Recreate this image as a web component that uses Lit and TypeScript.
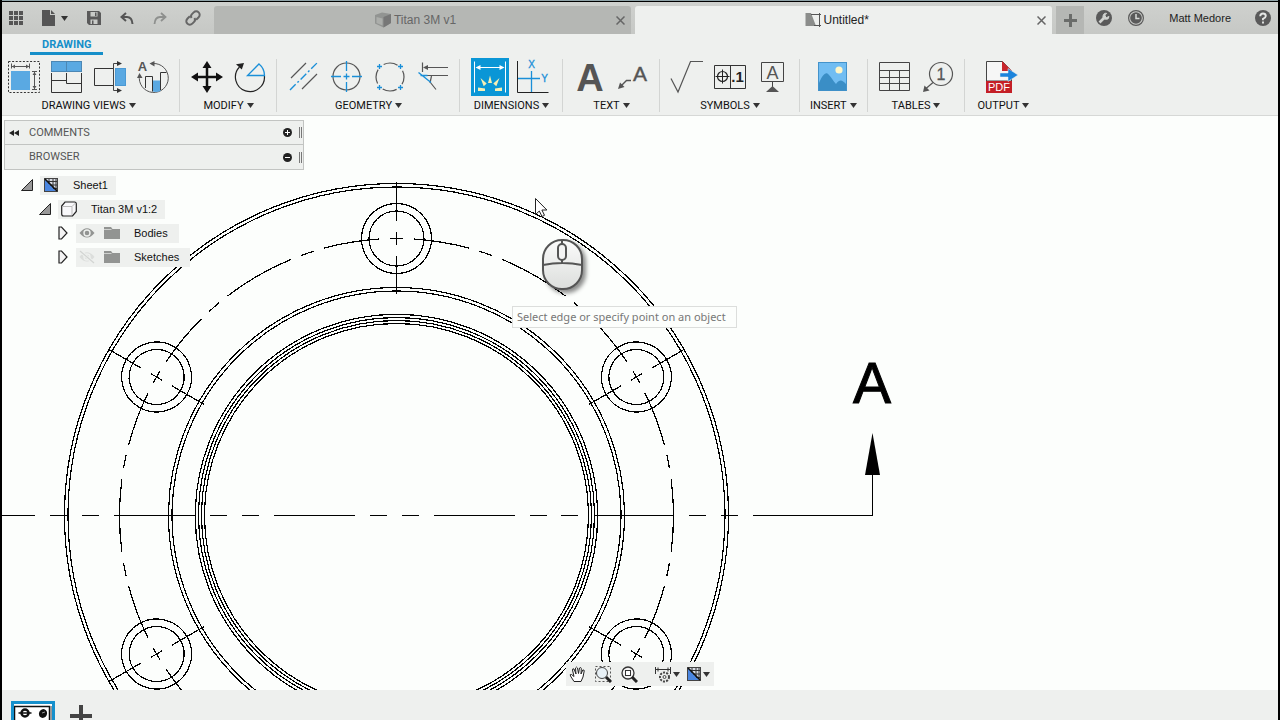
import { LitElement, html, svg, css } from "lit";
import { customElement, property } from "lit/decorators.js";

const CENTER = { x: 396.5, y: 515.5 };
const RINGS = [332, 328.5, 228, 224.5, 201.2, 198, 195, 192];
const BOLT_RADIUS = 277;
const HOLES = [0, 60, 120, 180, 240, 300];
// Start and end of each dash between two neighbouring holes, in degrees
const BOLT_DASHES = [
  [3.7, 15.2],
  [17.4, 20.2],
  [22.4, 37.6],
  [39.8, 42.6],
  [44.8, 56.3],
];
const AXIS_DASHES = [
  [2, 35], [50, 68], [82, 99], [114, 195], [210, 227], [242, 259], [274, 355],
  [370, 387], [402, 419], [434, 515], [530, 547], [561, 578], [594, 674],
  [689, 706], [721, 738], [753, 873],
];

const polar = (r: number, deg: number) => {
  const a = (deg * Math.PI) / 180;
  return `${(CENTER.x + r * Math.sin(a)).toFixed(2)} ${(CENTER.y - r * Math.cos(a)).toFixed(2)}`;
};

const arc = (r: number, from: number, to: number) =>
  `M${polar(r, from)}A${r} ${r} 0 0 1 ${polar(r, to)}`;

const caret = html`<svg class="caret" width="7" height="5" viewBox="0 0 7 5" aria-hidden="true"><path d="M0 0h7L3.500 5z" fill="#333" /></svg>`;

const sheetGlyph = svg`
  <rect x=".5" y=".5" width="13" height="13" fill="#d8dce4" stroke="#444" />
  <path d="M1 1v12h11z" fill="#4a86e0" />
  <path d="M5 1v5M9 1v9M12 1v11M3 3.500h10M6 7h7M9 10.500h4" stroke="#333" fill="none" />
  <path d="M1 1l12 12" stroke="#111" stroke-width="1.600" />`;

interface Tool { name: string; at: number; active?: boolean; art: unknown }
interface Group { label: string; kind?: string; tools: Tool[] }

const G = "#555";
const B = "#1a8fd8";

const GROUPS: Group[] = [
  {
    label: "DRAWING VIEWS", kind: "first",
    tools: [
      { name: "Base view", at: 5, art: svg`
        <rect x="8.500" y="61.500" width="31" height="31" fill="none" stroke="#333" stroke-dasharray="2 1.600" />
        <rect x="11" y="71" width="19" height="19" fill="#5aa9e2" />
        <path d="M11.500 63.500v5M29.500 63.500v5M12 66.500h17M32 71.500h5M32 89.500h5M34.500 72v17" stroke=${G} fill="none" />
        <path d="M12 66.500l3-2v4zM29 66.500l-3-2v4zM34.500 72l-2 3h4zM34.500 89l-2-3h4z" fill=${G} />` },
      { name: "Projected view", at: 48, art: svg`
        <rect x="51.500" y="61.500" width="30" height="10" fill="#5aa9e2" stroke="#4b87b4" />
        <path d="M66.500 62v9" stroke="#4b87b4" />
        <path d="M51.500 73v7.500h15v3h15V73M66.500 73v8M51.500 80v12.500h30V83" fill="none" stroke="#333" />` },
      { name: "Section view", at: 91, art: svg`
        <path d="M113.500 68.500h-19v17h19" fill="none" stroke="#333" />
        <rect x="115.500" y="68.500" width="10" height="17" fill="#5aa9e2" stroke="#4b9ad4" />
        <path d="M118 63.500h-4.500v27h4.500" fill="none" stroke="#444" />
        <path d="M122 63.500l-5-2.500v5zM122 90.500l-5-2.500v5z" fill="#333" />` },
      { name: "Detail view", at: 134, art: svg`
        <text x="142.500" y="71" class="ic b" font-size="13" text-anchor="middle" fill=${G}>A</text>
        <path d="M153 63.500a14.500 14.500 0 1 1-13.500 12" fill="none" stroke=${G} />
        <path d="M149.500 63.500l5-2.500v5.500zM139.500 73l-2.500 5h5.500z" fill=${G} />
        <path d="M152.500 80.500h8V91q-4 1.500-8 .5z" fill="#5aa9e2" />
        <path d="M145.500 88V76.500h7v15M160.500 90V72.500h6" fill="none" stroke="#333" />` },
    ],
  },
  {
    label: "MODIFY",
    tools: [
      { name: "Move", at: 188, art: svg`
        <path d="M207 66v22M196 77h22" stroke="#111" stroke-width="2.500" />
        <path d="M207 61l-4.500 7h9zM207 93l-4.500-7h9zM191 77l7-4.500v9zM223 77l-7-4.500v9z" fill="#111" />` },
      { name: "Rotate", at: 231, art: svg`
        <path d="M239.500 67a14.500 14.500 0 1 0 24.800 8" fill="none" stroke="#222" stroke-width="1.200" />
        <path d="M244 63l-8 1.200 5.800 5.300z" fill="#222" />
        <path d="M264.500 75.500h-17L259 64a15 15 0 0 1 5.500 11.500z" fill="none" stroke=${B} stroke-width="1.300" />` },
    ],
  },
  {
    label: "GEOMETRY",
    tools: [
      { name: "Centerline", at: 285, art: svg`
        <path d="M291 78l15-15M302 89l15-15" stroke=${G} stroke-width="1.200" />
        <path d="M290 90l27-27" stroke=${B} stroke-width="1.400" stroke-dasharray="8 2.500 2 2.500" />` },
      { name: "Center mark", at: 328, art: svg`
        <circle cx="346.500" cy="76.500" r="13.500" fill="none" stroke=${G} stroke-width="1.200" />
        <path d="M331 76.500h10M343.500 76.500h6M352 76.500h10M346.500 61v10M346.500 73.500v6M346.500 82v10" stroke=${B} stroke-width="1.300" />` },
      { name: "Center mark pattern", at: 371, art: svg`
        <circle cx="390" cy="77" r="14" fill="none" stroke=${G} stroke-width="1.200" stroke-dasharray="14.500 7.500" stroke-dashoffset="7" />
        <path d="M377 66.500h5M379.500 64v5M398 66.500h5M400.500 64v5M377 87.500h5M379.500 85v5M398 87.500h5M400.500 85v5" stroke=${B} stroke-width="1.300" />` },
      { name: "Edge extension", at: 414, art: svg`
        <path d="M422.500 62.500v9.500M424 67.500h24M427 75.500h21M431.500 76l-1.500 7M430 82l6 7.500" stroke=${G} stroke-width="1.200" fill="none" />
        <path d="M423 67.500l5-2.500v5z" fill=${G} />
        <path d="M418.500 72.500l12.500 10M420.500 75.500h7" stroke=${B} stroke-width="1.400" />` },
    ],
  },
  {
    label: "DIMENSIONS", kind: "wide",
    tools: [
      { name: "Dimension", at: 471, active: true, art: svg`
        <path d="M474.500 61.500v31M505.500 61.500v31M477 67.500h26" stroke="#fff" />
        <path d="M475.500 67.500l5-2.500v5zM504.500 67.500l-5-2.500v5z" fill="#fff" />
        <path d="M490 75.500l2 7.500h-4zM480.500 78l6.200 5.500-3 2.700zM499.500 78l-6.200 5.500 3 2.700zM478 87.500l7 1v2.500h-7zM502 87.500l-7 1v2.500h7z" fill="#f6efb4" />` },
      { name: "Ordinate dimension", at: 514, art: svg`
        <path d="M517.500 61v31.500h31" fill="none" stroke="#222" />
        <path d="M518 78.500h22M531.500 71v21" stroke=${B} stroke-width="1.300" />
        <text x="531.500" y="68" class="ic" font-size="10" text-anchor="middle" fill=${B} stroke=${B} stroke-width=".3">X</text>
        <text x="544.500" y="82" class="ic" font-size="10" text-anchor="middle" fill=${B} stroke=${B} stroke-width=".3">Y</text>` },
    ],
  },
  {
    label: "TEXT",
    tools: [
      { name: "Text", at: 571, art: svg`<text x="590" y="91" class="ic b" font-size="38" text-anchor="middle" fill=${G}>A</text>` },
      { name: "Leader text", at: 614, art: svg`
        <text x="640" y="80.500" class="ic" font-size="21" text-anchor="middle" fill=${G} stroke=${G} stroke-width=".4">A</text>
        <path d="M631 80.500h-4.500l-6 6" fill="none" stroke=${G} stroke-width="1.400" />
        <path d="M618 89l2-6.500 4.500 4.500z" fill=${G} />` },
    ],
  },
  {
    label: "SYMBOLS",
    tools: [
      { name: "Surface texture", at: 668, art: svg`<path d="M671 78.500l7 13.500 12.500-30.500H703" fill="none" stroke=${G} stroke-width="1.200" />` },
      { name: "Feature control frame", at: 711, art: svg`
        <path d="M714.500 65.500h31v23h-31zM730.500 65.500v23" fill="none" stroke="#333" />
        <circle cx="722.500" cy="76.500" r="5" fill="none" stroke="#222" stroke-width="1.200" />
        <path d="M715.500 76.500h14M722.500 69.500v14" stroke="#222" />
        <text x="737.500" y="82" class="ic b" font-size="15" text-anchor="middle" fill="#222">.1</text>` },
      { name: "Datum identifier", at: 754, art: svg`
        <path d="M761.500 62.500h22v19h-22zM772.500 82v5" fill="none" stroke="#444" />
        <text x="772.500" y="79" class="ic" font-size="18" text-anchor="middle" fill=${G}>A</text>
        <path d="M772.500 86l-6.500 6h13z" fill=${G} />` },
    ],
  },
  {
    label: "INSERT", kind: "broad",
    tools: [
      { name: "Insert image", at: 815, art: svg`
        <rect x="819.500" y="62.500" width="28" height="28" fill="#71bdf2" stroke="#4393cb" />
        <path d="M820 83c4-9 7-12 10-8 3 3 4 6 7 9 4-5 6-4 10 0v6.500h-27z" fill="#3a8ec6" />
        <circle cx="840" cy="70" r="3.600" fill="#fff6c8" />` },
    ],
  },
  {
    label: "TABLES",
    tools: [
      { name: "Table", at: 877, art: svg`<path d="M880.500 62.500h30v28h-30zM880.500 70.500h30M880.500 77.500h30M880.500 83.500h30M890.500 70.500v20M900.500 70.500v20" fill="none" stroke="#444" />` },
      { name: "Balloon", at: 920, art: svg`
        <circle cx="942" cy="74" r="11.500" fill="none" stroke=${G} stroke-width="1.200" />
        <text x="942" y="80" class="ic" font-size="16" text-anchor="middle" fill=${G} stroke=${G} stroke-width=".3">1</text>
        <path d="M934 82.500l-7 6" stroke=${G} stroke-width="1.200" />
        <path d="M924 92l1.500-6.500 5 5z" fill=${G} />` },
    ],
  },
  {
    label: "OUTPUT", kind: "last",
    tools: [
      { name: "Output PDF", at: 986, art: svg`
        <path d="M1003.500 61.500h-16V81h25V71z" fill="#f6f6f6" stroke="#444" />
        <path d="M1003 61l10 10h-10z" fill="#c8262c" />
        <rect x="987" y="81" width="26" height="12" fill="#c41f26" />
        <text x="1000" y="91" class="ic" font-size="11" text-anchor="middle" fill="#fff">PDF</text>
        <path d="M1001 73h8v-4.500l10 6.500-10 6.500V77h-8z" fill="#1c84dc" stroke="#eef1ee" stroke-width=".5" />` },
    ],
  },
];

@customElement("ribbon-group")
class RibbonGroup extends LitElement {
  @property({ attribute: false }) group!: Group;

  static styles = css`
    :host { display: block; }
    .tools { display: flex; gap: 5px; justify-content: center; }
    button { border: 0; padding: 0; background: none; font: inherit; color: inherit; }
    .tool { width: 38px; height: 38px; display: block; }
    .tool.active { background: #0a96d6; }
    .tool svg { display: block; overflow: visible; }
    .ic { font-family: "Liberation Sans", Arial, sans-serif; }
    .b { font-weight: bold; }
    .label { display: flex; align-items: center; gap: 3px; margin: 0 auto; height: 19px; font: 11px/19px Roboto, sans-serif; color: #111; white-space: nowrap; }
  `;

  render() {
    return html`
      <div class="tools">
        ${this.group.tools.map((t) => html`
          <button class=${t.active ? "tool active" : "tool"} aria-label=${t.name}>
            <svg width="38" height="38" viewBox=${`${t.at} 58 38 38`}>${t.art}</svg>
          </button>`)}
      </div>
      <button class="label">${this.group.label}${caret}</button>
    `;
  }
}

@customElement("drawing-canvas")
class DrawingCanvas extends LitElement {
  static styles = css`
    :host { display: block; overflow: hidden; }
    svg { display: block; width: 100%; height: 100%; }
    .lines { fill: none; stroke: #000; stroke-width: 1.200px; shape-rendering: crispEdges; }
    .mark { font: 57px "Liberation Sans", Arial, sans-serif; stroke: #000; stroke-width: 1px; }
    .mouse { filter: drop-shadow(3px 3px 2px rgba(0, 0, 0, 0.45)); }
  `;

  render() {
    return html`
      <svg role="img" aria-label="Flange drawing">
        <defs>
          <linearGradient id="body" x1="0" y1="0" x2="0" y2="1">
            <stop offset="0" stop-color="#fbfbfb" />
            <stop offset="1" stop-color="#dcdedc" />
          </linearGradient>
        </defs>
        <g transform="translate(-2 -116)">
          <g class="lines">
            ${RINGS.map((r) => svg`<circle cx=${CENTER.x} cy=${CENTER.y} r=${r} />`)}
            ${HOLES.map((h) => svg`
              <path d=${BOLT_DASHES.map(([a, b]) => arc(BOLT_RADIUS, h + a, h + b)).join("")} />
              <g transform="rotate(${h} ${CENTER.x} ${CENTER.y})">
                <circle cx="396.500" cy="238.500" r="35" />
                <circle cx="396.500" cy="238.500" r="27.500" />
                <path d="M396.500 182v38.500M396.500 256v37.500M396.500 232v13M390 238.500h13" />
              </g>`)}
            <path d=${AXIS_DASHES.map(([a, b]) => `M${a} 515.5H${b}`).join("")} />
            <path d="M872.500 515.500V470" />
          </g>
          <path d="M872.500 433l7.500 42h-15z" />
          <text class="mark" x="872" y="403" text-anchor="middle">A</text>
          <g class="mouse" stroke="#555" stroke-width="2" fill="none">
            <rect x="543" y="240" width="39" height="49" rx="19" fill="url(#body)" />
            <path d="M543 265q19.500-4 39 0M562 240v4M562 260v4" />
            <rect x="558" y="244" width="8" height="16" rx="4" fill="#f4f4f4" />
          </g>
          <path d="M535.500 198.500v16l3.800-3.500 2.700 5.500 2.500-1.200-2.600-5.300h5z" fill="#fff" stroke="#222" />
        </g>
      </svg>
    `;
  }
}

@customElement("app-root")
class AppRoot extends LitElement {
  static styles = css`
    :host { display: block; font: 11px/14px "Liberation Sans", Arial, sans-serif; color: #222; }
    * { box-sizing: border-box; }
    button { border: 0; padding: 0; margin: 0; background: none; font: inherit; color: inherit; }
    svg { display: block; }
    .shell { display: flex; flex-direction: column; height: 100vh; overflow: hidden; border: solid #000; border-width: 0 2px; background: #eef0ee; }
    .edge { height: 2px; flex: none; background: #8fa3a8; border-bottom: 1px solid #000; }

    .topbar { display: flex; flex: none; height: 32px; background: linear-gradient(#cfd1ce, #c6c8c5); }
    .quick { display: flex; gap: 9px; padding: 0 9px 0 2px; align-items: center; }
    .sq { width: 24px; height: 24px; display: flex; align-items: center; justify-content: center; flex: none; }
    .file { width: 36px; height: 24px; display: flex; align-items: center; gap: 6px; padding-left: 5px; }
    .tabs { display: flex; flex: 1; gap: 4px; padding-top: 4px; }
    .tab { display: flex; flex: 1; align-items: center; padding: 0 4px; background: #b5b7b4; border-radius: 3px 3px 0 0; color: #666; }
    .tab.current { background: #eef0ee; color: #222; }
    .name { flex: 1; display: flex; align-items: center; justify-content: center; gap: 3px; font-size: 12px; }
    .close { width: 14px; height: 14px; display: flex; align-items: center; justify-content: center; }
    .account { display: flex; align-items: center; padding-left: 4px; }
    .add { width: 28px; height: 28px; background: #b5b7b4; display: flex; align-items: center; justify-content: center; align-self: flex-end; }
    .side { margin-left: 8px; }
    .user { margin: 0 20px 0 21px; white-space: nowrap; }
    .help { margin-right: 3px; }

    .ribbon { flex: none; border-bottom: 1px solid #d6d8d6; }
    .spaces { display: flex; height: 21px; padding-left: 28px; }
    .space { padding: 4px 12px 0; border-bottom: 3px solid #158fc9; color: #158fc9; font: bold 11px/14px Roboto, sans-serif; }
    .groups { display: flex; padding-top: 3px; }
    .group { padding: 0 7px 0 8px; border-right: 1px solid #d3d5d3; border-image: linear-gradient(transparent 2px, #d3d5d3 2px, #d3d5d3 53px, transparent 53px) 1; }
    .first { padding-left: 3px; }
    .wide { padding: 0 10px 0 11px; }
    .broad { padding: 0 10px; }
    .last { padding: 0 13px; border: 0; }

    .work { position: relative; flex: 1; min-height: 0; background: #fcfefc; }
    .paper { position: absolute; inset: 0; }
    .panels { position: relative; width: 304px; padding: 4px 2px; }
    .panel { display: flex; align-items: center; height: 25px; padding: 0 1px 0 4px; background: #eef0ee; border: 1px solid #c2c4c2; color: #555; }
    .panel + .panel { border-top: 0; }
    .panel h2 { flex: 1; margin: 0; font: 11px/14px Roboto, sans-serif; }
    .fold { width: 12px; height: 14px; margin-right: 8px; display: flex; align-items: center; }
    .grip { width: 3px; height: 11px; margin-left: 7px; border: solid #777; border-width: 0 1px; }
    .tree { margin: 0; padding: 3px 0 0 17px; list-style: none; }
    .node { display: flex; align-items: center; height: 24px; }
    .twist { width: 12px; height: 14px; margin-right: 7px; display: flex; align-items: center; }
    .item { display: flex; align-items: center; height: 19px; padding: 0 8px 0 3px; background: #eef0ee; color: #111; }
    .item span { margin-left: 14px; }
    .l2 { padding-left: 18px; }
    .l3 { padding-left: 36px; }
    .l3 .item { gap: 9px; padding-right: 11px; }
    .l3 .item span { margin-left: 5px; }

    .tip { position: absolute; left: 510px; top: 190px; padding: 0 10px 0 4px; border: 1px solid #dcdedc; background: #fcfefc; color: #777; font: 11px/20px "Noto Sans", sans-serif; white-space: nowrap; }
    .nav { position: absolute; bottom: 4px; left: 50%; transform: translateX(-50%); display: flex; align-items: center; gap: 4px; height: 24px; padding-right: 2px; background: #eef0ee; }
    .nav button { display: flex; align-items: center; justify-content: center; gap: 2px; width: 22px; height: 20px; }
    .nav .menu { width: 27px; }
    .nav .apart { margin-left: 10px; }

    .sheets { display: flex; gap: 15px; flex: none; height: 30px; padding: 11px 9px 0; overflow: hidden; }
    .thumb { width: 44px; height: 32px; border: 3px solid #1690cc; background: #fff; flex: none; }
    .plus { width: 22px; height: 30px; display: flex; align-items: center; }
  `;

  private close(label: string) {
    return html`<button class="close" aria-label=${label}><svg width="9" height="9" viewBox="0 0 9 9"><path d="M.5 .5l8 8M8.500 .5l-8 8" stroke="#666" stroke-width="1.500" /></svg></button>`;
  }

  private twist(open: boolean) {
    return html`<button class="twist" aria-label=${open ? "Collapse" : "Expand"}>
      ${open
        ? html`<svg width="12" height="12" viewBox="0 0 12 12"><path d="M11.500 .5v11H.5z" fill="#999" stroke="#222" /></svg>`
        : html`<svg width="12" height="14" viewBox="-1 0 12 14"><path d="M1 1h2.500L9 7l-5.500 6H1z" fill="#f4f4f4" stroke="#222" stroke-width="1.200" /></svg>`}
    </button>`;
  }

  private folder = html`<svg width="16" height="14" viewBox="0 0 16 14"><path d="M0 1h7l1.500 2H16v10H0z" fill="#929492" /><path d="M0 3.500h7.500" stroke="#cfd1cf" /></svg>`;

  private eye(on: boolean) {
    return html`<svg width="16" height="14" viewBox="0 0 16 14">
      <path d="M.5 7Q8-2.500 15.500 7 8 16 .5 7z" fill=${on ? "#929492" : "#dcdedc"} />
      <circle cx="8" cy="7" r="3" fill=${on ? "#929492" : "#dcdedc"} stroke="#eef0ee" stroke-width="1.400" />
      ${on ? "" : svg`<path d="M1 1l14 12" stroke="#eef0ee" stroke-width="3" /><path d="M1 1l14 12" stroke="#d2d4d2" stroke-width="1.200" />`}
    </svg>`;
  }

  private topbar() {
    return html`
      <header class="topbar">
        <div class="quick">
          <button class="sq" aria-label="Data panel"><svg width="14" height="14" viewBox="0 0 14 14"><path d="M0 0h4v4H0zM5 0h4v4H5zM10 0h4v4h-4zM0 5h4v4H0zM5 5h4v4H5zM10 5h4v4h-4zM0 10h4v4H0zM5 10h4v4H5zM10 10h4v4h-4z" fill="#555" /></svg></button>
          <button class="file" aria-label="File"><svg width="13" height="16" viewBox="0 0 13 16"><path d="M0 0h8v5h5v11H0zM9 0l4 4H9z" fill="#555" /></svg>${caret}</button>
          <button class="sq" aria-label="Save"><svg width="14" height="14" viewBox="0 0 14 14"><path d="M1 0h11l2 2v12H2l-2-2V0z" fill="#5a5a5a" /><path d="M3.500 1v4.500h7V1zM3.500 13V8.500h7V13z" fill="#c9cbc8" /><path d="M8 1.500h1.500V5H8zM5 9.500h1.500V13H5z" fill="#5a5a5a" /></svg></button>
          <button class="sq" aria-label="Undo"><svg width="14" height="13" viewBox="0 0 14 13"><path d="M6 1L1.500 5 6 9M2 5h5q5 0 5.500 7" fill="none" stroke="#555" stroke-width="2" /></svg></button>
          <button class="sq" aria-label="Redo"><svg width="14" height="13" viewBox="0 0 14 13"><path d="M8 1l4.500 4L8 9M12 5H7q-5 0-5.500 7" fill="none" stroke="#8e908e" stroke-width="1.800" /></svg></button>
          <button class="sq" aria-label="Link"><svg width="18" height="18" viewBox="0 0 18 18"><g transform="rotate(-45 9 9)" fill="none" stroke="#666" stroke-width="2"><path d="M8 5.500H4.500a3.500 3.500 0 0 0 0 7H7q2.500 0 3-2.500M10 12.500h3.500a3.500 3.500 0 0 0 0-7H11q-2.500 0-3 2.500" /></g></svg></button>
        </div>
        <nav class="tabs" aria-label="Documents">
          <div class="tab">
            <button class="name"><svg width="16" height="16" viewBox="0 0 16 16"><path d="M0 3l7-2.500 9 1.500v9L8.500 15.500 0 11.500z" fill="#929492" /><path d="M8.500 5L16 2v9l-7.500 4.500z" fill="#777" /><path d="M1.500 5l6 1.500v7l-6-2.500z" fill="#acaeab" /></svg>Titan 3M v1</button>
            ${this.close("Close Titan 3M v1")}
          </div>
          <div class="tab current">
            <button class="name"><svg width="16" height="16" viewBox="0 0 16 16"><path d="M.5 1H6l5 13H.5z" fill="#8b8d8b" /><path d="M6 2.500h10M14.500 1v14M9 13.500h7" stroke="#555" fill="none" /></svg>Untitled*</button>
            ${this.close("Close Untitled")}
          </div>
        </nav>
        <div class="account">
          <button class="add" aria-label="New tab"><svg width="13" height="13" viewBox="0 0 13 13"><path d="M6.500 0v13M0 6.500h13" stroke="#6a6c6a" stroke-width="3" /></svg></button>
          <button class="sq side" aria-label="Extensions"><svg width="16" height="16" viewBox="0 0 16 16"><circle cx="8" cy="8" r="8" fill="#5a5a5a" /><path d="M3.500 12.500l4.500-4.500" stroke="#d0d2cf" stroke-width="2.600" /><path d="M11 3.500a3 3 0 1 0 2 3l-2.500 1-1.500-1.500z" fill="#d0d2cf" stroke="#d0d2cf" /><path d="M10 6l3-3" stroke="#5a5a5a" stroke-width="2" /></svg></button>
          <button class="sq side" aria-label="Job status"><svg width="16" height="16" viewBox="0 0 16 16"><circle cx="8" cy="8" r="7.400" fill="none" stroke="#5a5a5a" stroke-width="1.200" /><circle cx="8" cy="8" r="5.800" fill="#5a5a5a" /><path d="M8 4v4.500h3.500" fill="none" stroke="#d8dad8" stroke-width="1.500" /></svg></button>
          <button class="user">Matt Medore</button>
          <button class="sq help" aria-label="Help"><svg width="16" height="16" viewBox="0 0 16 16"><circle cx="8" cy="8" r="8" fill="#5a5a5a" /><path d="M5.200 6.200Q5.400 3.500 8 3.500t2.800 2.400Q10.800 7.500 8 8.800v1.400M8 11.500v2" fill="none" stroke="#e4e6e4" stroke-width="1.900" /></svg></button>
        </div>
      </header>`;
  }

  private nav() {
    return html`
      <div class="nav" role="toolbar" aria-label="Navigation">
        <button aria-label="Pan"><svg width="17" height="17" viewBox="0 0 17 17"><path d="M5 15.500L1.500 10Q.5 8 2.500 8.500L5 10.500 3.500 4q0-1.800 1.500-1L7 8 6.500 2Q7.500 .2 8.500 2L9.500 7.500 10.500 2q1.500-1.200 1.800.5L12 8l1.800-4q1.500-.5 1.400 1L14 11l-2 4.500z" fill="#fff" stroke="#222" /></svg></button>
        <button aria-label="Zoom window"><svg width="17" height="17" viewBox="0 0 17 17"><rect x=".5" y=".5" width="15" height="15" fill="none" stroke="#555" stroke-dasharray="2 2" /><circle cx="7" cy="7" r="5.500" fill="#e8f1f6" stroke="#444" /><path d="M11 11l5 5" stroke="#222" stroke-width="3" /></svg></button>
        <button aria-label="Fit"><svg width="17" height="17" viewBox="0 0 17 17"><circle cx="7" cy="7" r="6" fill="#f4f4f4" stroke="#333" stroke-width="1.300" /><rect x="4.500" y="4.500" width="5" height="5" fill="#fff" stroke="#333" /><path d="M11 11l5 5" stroke="#222" stroke-width="3" /></svg></button>
        <button class="menu apart" aria-label="Annotation settings"><svg width="16" height="17" viewBox="0 0 16 17"><path d="M.5 1v7M15.500 1v7M1 3.500h14M3 1.500v4M13 1.500v4" stroke="#333" fill="none" /><circle cx="9.500" cy="11" r="4.500" fill="#eef0ee" stroke="#444" stroke-width="2" stroke-dasharray="2 1.200" /><circle cx="9.500" cy="11" r="1.500" fill="none" stroke="#444" /></svg>${caret}</button>
        <button class="menu" aria-label="Sheet settings"><svg width="14" height="14" viewBox="0 0 14 14">${sheetGlyph}</svg>${caret}</button>
      </div>`;
  }

  render() {
    return html`
      <div class="shell">
        <div class="edge"></div>
        ${this.topbar()}
        <section class="ribbon">
          <div class="spaces"><button class="space">DRAWING</button></div>
          <div class="groups">
            ${GROUPS.map((g) => html`<div class="group ${g.kind ?? ""}"><ribbon-group .group=${g}></ribbon-group></div>`)}
          </div>
        </section>
        <main class="work">
          <drawing-canvas class="paper"></drawing-canvas>
          <aside class="panels">
            <div class="panel">
              <button class="fold" aria-label="Collapse panels"><svg width="10" height="6" viewBox="0 0 10 6"><path d="M5 0v6L0 3zM10 0v6L5 3z" fill="#222" /></svg></button>
              <h2>COMMENTS</h2>
              <button aria-label="Expand comments"><svg width="9" height="9" viewBox="0 0 9 9"><circle cx="4.500" cy="4.500" r="4.500" fill="#222" /><path d="M4.500 2v5M2 4.500h5" stroke="#fff" /></svg></button>
              <i class="grip"></i>
            </div>
            <div class="panel">
              <i class="fold"></i>
              <h2>BROWSER</h2>
              <button aria-label="Collapse browser"><svg width="9" height="9" viewBox="0 0 9 9"><circle cx="4.500" cy="4.500" r="4.500" fill="#222" /><path d="M2 4.500h5" stroke="#fff" /></svg></button>
              <i class="grip"></i>
            </div>
            <ul class="tree">
              <li class="node">${this.twist(true)}<div class="item"><svg width="16" height="16" viewBox="-1 -1 16 16">${sheetGlyph}</svg><span>Sheet1</span></div></li>
              <li class="node l2">${this.twist(true)}<div class="item"><svg width="16" height="16" viewBox="0 0 16 16"><path d="M.7 5L4 1h9.500Q15.300 1 15.300 3v7.500L11.500 15H2.500Q.7 15 .7 13z" fill="#f8f8fa" stroke="#222" stroke-width="1.200" /><path d="M1.500 5.500H11V14M11 5.500L14.500 2" fill="none" stroke="#bbb" /></svg><span>Titan 3M v1:2</span></div></li>
              <li class="node l3">${this.twist(false)}<div class="item">${this.eye(true)}${this.folder}<span>Bodies</span></div></li>
              <li class="node l3">${this.twist(false)}<div class="item">${this.eye(false)}${this.folder}<span>Sketches</span></div></li>
            </ul>
          </aside>
          <div class="tip" role="tooltip">Select edge or specify point on an object</div>
          ${this.nav()}
        </main>
        <footer class="sheets">
          <button class="thumb" aria-label="Sheet 1"><svg width="38" height="26" viewBox="0 0 38 26"><path d="M.5 26V2.500h35V26" fill="none" stroke="#111" stroke-width="1.500" /><path d="M37 2v24" stroke="#999" stroke-width="2" /><circle cx="11" cy="9" r="3.500" fill="#fff" stroke="#111" stroke-width="2.500" /><path d="M4.500 9h13M8 9h6" stroke="#111" stroke-width="1.500" /><ellipse cx="29" cy="9.500" rx="4" ry="4.500" fill="#111" transform="rotate(25 29 9.500)" /><path d="M28 9l3-1" stroke="#999" /></svg></button>
          <button class="plus" aria-label="Add sheet"><svg width="22" height="22" viewBox="0 0 22 22"><path d="M11 0v22M0 11h22" stroke="#444" stroke-width="4" /></svg></button>
        </footer>
      </div>
    `;
  }
}
